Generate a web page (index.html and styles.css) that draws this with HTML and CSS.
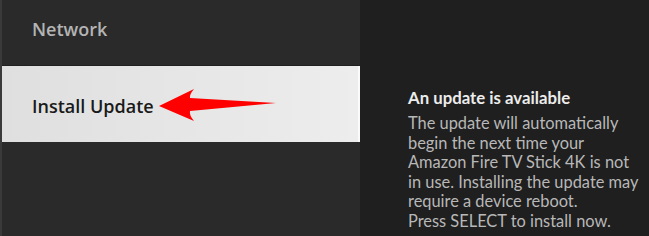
FILE: index.html
```html
<!DOCTYPE html>
<html>
<head>
<meta charset="utf-8">
<link rel="stylesheet" href="styles.css">
</head>
<body>
<div class="screen">
  <div class="menu">
    <div class="item item-top">Network</div>
    <div class="item item-active">
      <span class="label">Install Update</span>
      <svg class="arrow" width="118" height="34" viewBox="0 0 118 34">
        <path d="M0 17 L35 0 Q30 6 31 9 L117 14 L31 22 Q30 26 35 32 Z" fill="#ff0000"/>
      </svg>
    </div>
  </div>
  <div class="details">
    <div class="info">
      <div class="title">An update is available</div>
      <p class="body">The update will automatically<br>begin the next time your<br>Amazon Fire TV Stick 4K is not<br>in use. Installing the update may<br>require a device reboot.<br>Press SELECT to install now.</p>
    </div>
  </div>
</div>
</body>
</html>
```

FILE: styles.css
```css
html, body {
  margin: 0;
  padding: 0;
  width: 649px;
  height: 236px;
  overflow: hidden;
  background: #1f1f1f;
}
.screen {
  display: grid;
  grid-template-columns: 360px 1fr;
  height: 236px;
  font-family: "Open Sans", "Noto Sans", sans-serif;
}
.menu {
  background: #2a2a2a;
  border-left: 2px solid #3a3a3a;
  display: flex;
  flex-direction: column;
}
.item {
  display: flex;
  align-items: center;
  padding-left: 30px;
  font-size: 18px;
  font-weight: 600;
}
.item-top {
  height: 66px;
  align-items: flex-start;
  padding-top: 17px;
  box-sizing: border-box;
  color: #b4b4b4;
  border-bottom: 1px solid #202020;
}
.item-active {
  height: 76px;
  padding-top: 4px;
  box-sizing: border-box;
  background: linear-gradient(90deg, #dfdfdf 0%, #ededed 100%);
  color: #1a1a1a;
  border-right: 2px solid #fafafa;
}
.arrow {
  margin-left: 5px;
  margin-top: 0;
  display: block;
}
.details {
  background: #1f1f1f;
  display: flex;
  padding: 87px 0 0 48px;
  font-family: "Lato", "Open Sans", sans-serif;
}
.info {
  white-space: nowrap;
}
.title {
  color: #ececec;
  font-size: 16.8px;
  font-weight: 700;
  line-height: 21px;
}
.body {
  margin: 5px 0 0;
  color: #b8b8b8;
  font-size: 16.4px;
  line-height: 19.6px;
}
```
